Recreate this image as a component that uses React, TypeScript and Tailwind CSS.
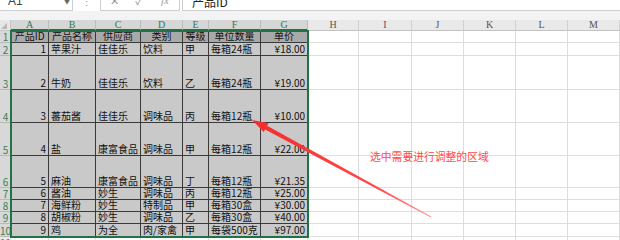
import React from "react";

const F = "font-['Noto_Sans_CJK_SC',sans-serif]";

const data: string[][] = [
  ["产品ID", "产品名称", "供应商", "类别", "等级", "单位数量", "单价"],
  ["1", "苹果汁", "佳佳乐", "饮料", "甲", "每箱24瓶", "¥18.00"],
  ["2", "牛奶", "佳佳乐", "饮料", "乙", "每箱24瓶", "¥19.00"],
  ["3", "蕃茄酱", "佳佳乐", "调味品", "丙", "每箱12瓶", "¥10.00"],
  ["4", "盐", "康富食品", "调味品", "甲", "每箱12瓶", "¥22.00"],
  ["5", "麻油", "康富食品", "调味品", "丁", "每箱12瓶", "¥21.35"],
  ["6", "酱油", "妙生", "调味品", "丙", "每箱12瓶", "¥25.00"],
  ["7", "海鲜粉", "妙生", "特制品", "甲", "每箱30盒", "¥30.00"],
  ["8", "胡椒粉", "妙生", "调味品", "乙", "每箱30盒", "¥40.00"],
  ["9", "鸡", "为全", "肉/家禽", "甲", "每袋500克", "¥97.00"],
];

const selCols = ["A", "B", "C", "D", "E", "F", "G"];
const restCols = ["H", "I", "J", "K", "L", "M"];
const rowHeights = ["h-[12px]", "h-[13px]", "h-[34px]", "h-[33px]", "h-[33px]", "h-[32px]", "h-[12px]", "h-[12px]", "h-[12px]", "h-[13px]"];

export default function App() {
  return (
    <div className={`relative w-[620px] h-[240px] overflow-hidden bg-white ${F}`}>
      {/* formula bar (top part clipped) */}
      <div className="h-[20px] -mt-[9px] flex bg-white text-[#444]">
        <div className="w-[73px] h-full flex items-center justify-between pl-[8px] pr-[1px] border-r border-b border-[#cfcfcf] bg-white">
          <span className="text-[12px] font-['Liberation_Sans',sans-serif]">A1</span>
          <span className="text-[8px] text-[#666]">▼</span>
        </div>
        <div className="w-[27px] h-full flex items-center justify-center text-[#999] text-[11px]">⋮</div>
        <div className="w-[80px] h-full flex items-center border-l border-r border-b border-[#cfcfcf] bg-white text-[#9a9a9a]">
          <span className="w-[26px] text-center text-[11px]">✕</span>
          <span className="w-[24px] text-center text-[11px]">✓</span>
          <span className="w-[28px] text-center text-[11px] italic font-['Liberation_Serif',serif]">fx</span>
        </div>
        <div className="w-[2px]" />
        <div className="flex-1 h-full flex items-end pb-[2px] pl-[9px] border-l border-b border-[#cfcfcf] bg-white text-[12px] leading-none text-[#222]">
          产品ID
        </div>
      </div>
      <div className="h-[9px] bg-[#f3f3f3]" />

      {/* column headers */}
      <div className="flex h-[11px] font-['Liberation_Serif',serif] text-[10px] leading-none">
        <div className="w-[20px] h-full bg-[#e6e6e6] border-r border-b border-[#c6c6c6] flex items-end justify-end pr-[3px] pb-[1px]">
          <div className="w-0 h-0 border-l-[6px] border-l-transparent border-b-[6px] border-b-[#b8b8b8]" />
        </div>
        <div className="flex">
          {selCols.map((c, i) => (
            <div
              key={c}
              className={`${["w-[38px]", "w-[47px]", "w-[45px]", "w-[42px]", "w-[26px]", "w-[52px]", "w-[47px]"][i]} h-full bg-[#d6d6d6] text-[#2f7a4a] border-r border-[#bcbcbc] border-b-2 border-b-[#217346] flex items-center justify-center`}
            >
              {c}
            </div>
          ))}
        </div>
        <div className="flex">
          {restCols.map((c, i) => (
            <div
              key={c}
              className={`${["w-[51px]", "w-[53px]", "w-[52px]", "w-[52px]", "w-[52px]", "w-[52px]"][i]} h-full bg-[#e9e9e9] text-[#555] border-r border-[#d0d0d0] border-b border-b-[#c2c2c2] flex items-center justify-center`}
            >
              {c}
            </div>
          ))}
        </div>
      </div>

      {/* body */}
      <div className="flex">
        {/* row headers */}
        <div className="w-[20px] flex flex-col text-[10px] leading-none">
          {rowHeights.map((h, i) => (
            <div key={i} className={`${h} bg-[#d8d8d8] text-[#3f7d55] border-b border-[#b8b8b8] flex items-end justify-center`}>
              {i + 1}
            </div>
          ))}
          <div className="h-[12px] bg-[#e9e9e9] text-[#666] border-b border-[#c8c8c8] flex items-end justify-center">11</div>
        </div>

        {/* selected block A-G */}
        <div className="flex flex-col">
          <div className="relative z-10 grid grid-cols-[38px_47px_45px_42px_26px_52px_47px] grid-rows-[12px_13px_34px_33px_33px_32px_12px_12px_12px_13px] outline-2 outline-solid outline-[#217346] -outline-offset-1 text-[10px] leading-none text-[#111]">
            {data.map((row, r) =>
              row.map((v, c) => {
                const align =
                  r === 0 ? "justify-center" : c === 0 || c === 6 ? "justify-end" : "justify-start";
                const bg = r === 0 ? "bg-[#a9a9a9]" : "bg-[#c9c9c9]";
                return (
                  <div
                    key={`${r}-${c}`}
                    className={`${bg} ${align} flex items-end px-[2px] pb-[1px] border-r border-b border-[#3a3a3a] whitespace-nowrap overflow-hidden`}
                  >
                    {v}
                  </div>
                );
              })
            )}
          </div>
          <div className="flex h-[12px]">
            {["w-[38px]", "w-[47px]", "w-[45px]", "w-[42px]", "w-[26px]", "w-[52px]", "w-[47px]"].map((w, i) => (
              <div key={i} className={`${w} h-full bg-white border-r border-b border-[#dedede]`} />
            ))}
          </div>
        </div>

        {/* rest H-M */}
        <div className="grid grid-cols-[51px_53px_52px_52px_52px_52px] grid-rows-[12px_13px_34px_33px_33px_32px_12px_12px_12px_13px_12px]">
          {Array.from({ length: 11 * 6 }).map((_, i) => (
            <div key={i} className="bg-white border-r border-b border-[#dedede]" />
          ))}
        </div>
      </div>

      {/* annotation */}
      <div className="absolute left-[370px] top-[151px] text-[10.8px] leading-none text-[#ff4a4a] whitespace-nowrap">
        选中需要进行调整的区域
      </div>
      <svg className="absolute left-0 top-0 pointer-events-none z-20" width="620" height="240" viewBox="0 0 620 240">
        <defs>
          <linearGradient id="arr" x1="252" y1="120" x2="431" y2="217" gradientUnits="userSpaceOnUse">
            <stop offset="0" stopColor="#f52b2b" />
            <stop offset="0.7" stopColor="#ff4a4a" />
            <stop offset="1" stopColor="#ff9a9a" />
          </linearGradient>
        </defs>
        <polygon
          points="252,120 268.5,123.2 267.1,125.8 431.2,216.6 430.8,217.4 265.1,129.4 263.7,132"
          fill="url(#arr)"
        />
      </svg>
    </div>
  );
}
